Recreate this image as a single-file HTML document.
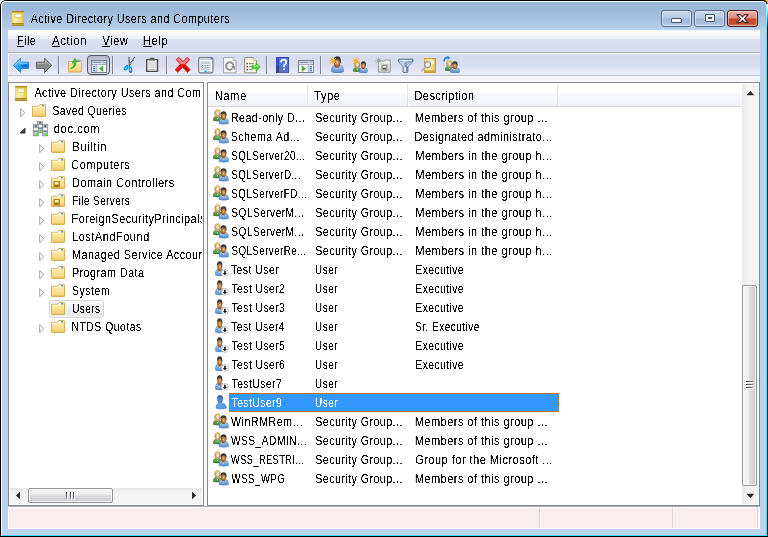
<!DOCTYPE html>
<html><head><meta charset="utf-8"><title>Active Directory Users and Computers</title>
<style>
html,body{margin:0;padding:0;}
body{width:768px;height:537px;position:relative;overflow:hidden;background:#fff;font-family:"Liberation Sans", sans-serif;font-size:12px;color:#000;}
div,span,svg{position:absolute;box-sizing:border-box;}
.t{white-space:nowrap;line-height:14px;height:14px;filter:url(#bw);transform-origin:0 0;}
.clip{overflow:hidden;}
u{text-decoration:underline;}
</style></head>
<body>

<svg width="0" height="0" style="position:absolute">
<defs>
<filter id="bw" x="0" y="0" width="100%" height="100%" color-interpolation-filters="sRGB"><feComponentTransfer><feFuncA type="discrete" tableValues="0 0 0.15 0.8 1 1 1"/></feComponentTransfer></filter>
<linearGradient id="gFold" x1="0" y1="0" x2="0" y2="1"><stop offset="0" stop-color="#FFF2B8"/><stop offset="1" stop-color="#F5D072"/></linearGradient>
<linearGradient id="gBook" x1="0" y1="0" x2="1" y2="0"><stop offset="0" stop-color="#EED470"/><stop offset=".25" stop-color="#FBF0A8"/><stop offset=".65" stop-color="#F6E48C"/><stop offset="1" stop-color="#E2BA46"/></linearGradient>
<linearGradient id="gBlueSh" x1="0" y1="0" x2="0" y2="1"><stop offset="0" stop-color="#B0D0F2"/><stop offset="1" stop-color="#4C86CC"/></linearGradient>
<linearGradient id="gGreenSh" x1="0" y1="0" x2="0" y2="1"><stop offset="0" stop-color="#7CB864"/><stop offset="1" stop-color="#3C8030"/></linearGradient>
<radialGradient id="gFaceM" cx=".55" cy=".45" r=".6"><stop offset="0" stop-color="#F0C8A0"/><stop offset=".45" stop-color="#C07838"/><stop offset="1" stop-color="#7A3C10"/></radialGradient>
<linearGradient id="gHairW" x1="0" y1="0" x2="1" y2="0"><stop offset="0" stop-color="#A88040"/><stop offset=".3" stop-color="#D8BC58"/><stop offset=".7" stop-color="#D0B050"/><stop offset="1" stop-color="#98703C"/></linearGradient>
<radialGradient id="gFaceW" cx=".5" cy=".4" r=".6"><stop offset="0" stop-color="#FFF6EC"/><stop offset=".6" stop-color="#F0D0B0"/><stop offset="1" stop-color="#C08858"/></radialGradient>
<symbol id="folder" viewBox="0 0 16 16">
 <path d="M1.5 4.3 L1.5 14 Q1.5 14.5 2 14.5 L14 14.5 Q14.5 14.5 14.5 14 L14.5 3.3 Q14.5 2.5 13.7 2.5 L8.9 2.5 L7.5 4.3 Z" fill="url(#gFold)" stroke="#D6AE54" stroke-width="1"/>
 <path d="M2.2 5.3 L7.9 5.3 L9.3 3.5 L13.8 3.5" fill="none" stroke="#FFFBE2" stroke-width="1"/>
 <path d="M2 13.6 H14" stroke="#EDC25E" stroke-width="1"/>
 <rect x="10.6" y="3" width="2.6" height="1.5" fill="#5AA0EC"/>
 <rect x="9.6" y="3" width="1.4" height="1.5" fill="#fff" opacity=".85"/>
</symbol>
<symbol id="folderou" viewBox="0 0 16 16">
 <use href="#folder"/>
 <rect x="4" y="7.4" width="5.4" height="5.6" fill="#C49A28" stroke="#A47C14" stroke-width=".8"/>
 <rect x="5" y="8.2" width="3.4" height="2.2" fill="#FFF4B0"/>
 <rect x="5" y="8.2" width="1.6" height="1.1" fill="#FFFFF0"/>
 <rect x="5" y="11" width="3.4" height="1.2" fill="#8A6810"/>
</symbol>
<symbol id="book" viewBox="0 0 12 15" preserveAspectRatio="none">
 <rect x="0" y="0" width="12" height="15" fill="url(#gBook)"/>
 <rect x="0" y="0" width="12" height="1" fill="#B08A1A"/>
 <rect x="0" y="1" width="12" height="1" fill="#D2B042"/>
 <rect x="2.9" y="2.9" width="6.4" height="3.4" fill="#FFFEF2" stroke="#DCBE50" stroke-width=".8"/>
 <rect x="0" y="12" width="12" height="1" fill="#A88A1C"/>
 <rect x="0" y="13" width="12" height="1" fill="#BCA444"/>
 <rect x="0" y="14" width="12" height="1" fill="#B08A1A"/>
</symbol>
<symbol id="domain" viewBox="0 0 16 16">
 <rect x="4.6000000000000005" y="0.4" width="5" height="11.0" fill="#BCC4D0" stroke="#788090" stroke-width=".7"/>
 <rect x="5.1000000000000005" y="0.9" width="4" height="2.4" fill="#E6EAF0"/>
 <ellipse cx="7.1" cy="1.9" rx="1.5" ry=".75" fill="#12323A"/>
 <rect x="5.1000000000000005" y="4" width="4" height="2" fill="#F6F8FC"/>
 <rect x="5.1000000000000005" y="3.4" width="4" height=".6" fill="#8890A0"/>
 <rect x="5.1000000000000005" y="6.8" width="4" height=".8" fill="#5C6474"/>
 <rect x="7.0" y="8.8" width="2.2" height="2.3" fill="#3CE010"/>
 <rect x="7.4" y="9.0" width="1.2" height="1" fill="#A0F050"/>
 <rect x="0.4" y="3.4" width="5" height="11.399999999999999" fill="#BCC4D0" stroke="#788090" stroke-width=".7"/>
 <rect x="0.9" y="3.9" width="4" height="2.4" fill="#E6EAF0"/>
 <ellipse cx="2.9" cy="4.9" rx="1.5" ry=".75" fill="#12323A"/>
 <rect x="0.9" y="7" width="4" height="2" fill="#F6F8FC"/>
 <rect x="0.9" y="6.4" width="4" height=".6" fill="#8890A0"/>
 <rect x="0.9" y="9.8" width="4" height=".8" fill="#5C6474"/>
 <rect x="2.8" y="12.4" width="2.2" height="2.3" fill="#3CE010"/>
 <rect x="3.2" y="12.6" width="1.2" height="1" fill="#A0F050"/>
 <rect x="9.700000000000001" y="3.4" width="5" height="11.399999999999999" fill="#BCC4D0" stroke="#788090" stroke-width=".7"/>
 <rect x="10.200000000000001" y="3.9" width="4" height="2.4" fill="#E6EAF0"/>
 <ellipse cx="12.200000000000001" cy="4.9" rx="1.5" ry=".75" fill="#12323A"/>
 <rect x="10.200000000000001" y="7" width="4" height="2" fill="#F6F8FC"/>
 <rect x="10.200000000000001" y="6.4" width="4" height=".6" fill="#8890A0"/>
 <rect x="10.200000000000001" y="9.8" width="4" height=".8" fill="#5C6474"/>
 <rect x="12.100000000000001" y="12.4" width="2.2" height="2.3" fill="#3CE010"/>
 <rect x="12.5" y="12.6" width="1.2" height="1" fill="#A0F050"/>
</symbol>
<symbol id="man" viewBox="0 0 11 14" preserveAspectRatio="none">
 <path d="M0.5 13 Q0.3 8.3 3.3 7.6 L7.7 7.6 Q10.8 8.3 10.5 13 Q5.5 15 0.5 13 Z" fill="url(#gBlueSh)" stroke="#4A7CBC" stroke-width=".6"/>
 <path d="M3.6 7.6 L5.2 11.4 L6.4 7.6 Z" fill="#F6FAFE"/>
 <path d="M2.6 4.4 Q2.5 8.2 3.9 9.4 Q5.2 10.2 6.6 9.2 Q8 7.6 7.8 4 Q6.6 1.6 4.6 2 Q3 2.6 2.6 4.4 Z" fill="url(#gFaceM)"/>
 <path d="M2.3 4.6 Q1.8 0.3 5.6 0.3 Q9 0.5 8.3 5.6 L7.7 6.6 Q7.8 3 5.8 2.6 Q3.4 2.4 2.3 4.6 Z" fill="#34383C"/>
</symbol>
<symbol id="woman" viewBox="0 0 10 13" preserveAspectRatio="none">
 <path d="M0.3 12 Q0 8.2 3 7.6 L6.5 7.6 Q9.5 8.2 9.5 12 Q5 13.5 0.3 12 Z" fill="url(#gGreenSh)" stroke="#356E2A" stroke-width=".6"/>
 <path d="M3.9 7.6 L4.9 11.2 L5.9 7.6 Z" fill="#F4F8F0"/>
 <rect x="4.3" y="8" width="1.2" height="1.2" fill="#E03020"/>
 <path d="M1.9 7 Q0.4 1 4.6 0.2 Q8.8 0.4 7.7 7 Z" fill="url(#gHairW)"/>
 <ellipse cx="5" cy="4.6" rx="1.9" ry="3" fill="url(#gFaceW)"/>
 <path d="M2.3 4 Q2.2 0.6 4.8 0.5 Q7.4 0.8 7.4 3.8 Q6 1.9 4.4 2.2 Q3 2.4 2.3 4 Z" fill="#DCC060"/>
</symbol>
<symbol id="group" viewBox="0 0 16 16">
 <use href="#woman" x="0" y="0" width="9.5" height="12.5"/>
 <use href="#man" x="5.5" y="2" width="10.5" height="13.5"/>
</symbol>
<symbol id="user" viewBox="0 0 16 16">
 <use href="#man" x="2" y="0" width="9.6" height="15.2" preserveAspectRatio="none"/>
</symbol>
<symbol id="userdis" viewBox="0 0 16 16">
 <use href="#man" x="2" y="0" width="9.6" height="15.2" preserveAspectRatio="none"/>
 <circle cx="11.9" cy="11.9" r="3.4" fill="#fff" stroke="#B4B4B4" stroke-width=".8"/>
 <path d="M11.1 9.8 h1.6 v2.1 h1.3 l-2.1 2.4 l-2.1 -2.4 h1.3 Z" fill="#161616"/>
</symbol>
<symbol id="usersel" viewBox="0 0 16 16">
 <path d="M3 14.2 Q2.6 10 5.6 9.4 L10 9.4 Q13.6 10 13.4 14.2 Q8 16 3 14.2 Z" fill="#5C9CE2" stroke="#3C7CCC" stroke-width=".5"/>
 <ellipse cx="7" cy="5.6" rx="2.7" ry="3.9" fill="#4A84D0"/>
 <path d="M4.2 5 Q3.8 0.9 7.4 0.9 Q10.6 1.1 10 6.2 Q9.4 3.3 7.4 3.1 Q5.2 3 4.2 5 Z" fill="#2E60AC"/>
 <path d="M6 9.6 L7.4 12.6 L8.6 9.6 Z" fill="#78B0EC"/>
</symbol>
</defs>
</svg>

<div style="left:0px;top:0px;width:768px;height:537px;background:#000;border-radius:6px 6px 0 0;"></div>
<div style="left:767px;top:0px;width:1px;height:32px;background:linear-gradient(#fff 0,#fff 8px,#8A7A60 18px,#000 30px);"></div>
<div style="left:1px;top:1px;width:766px;height:535px;background:#fff;border-radius:5px 5px 0 0;"></div>
<div style="left:1px;top:30px;width:766px;height:506px;background:linear-gradient(90deg,#fff 0,#fff 1px,transparent 1px),#3CD8F8;"></div>
<div style="left:1px;top:1px;width:766px;height:29px;background:#fff;border-radius:5px 5px 0 0;"></div>
<div style="left:766px;top:3px;width:1px;height:60px;background:linear-gradient(#A8E8FF,#3CD8F8);"></div>
<div style="left:2px;top:2px;width:764px;height:533px;border-radius:4px 4px 0 0;background:linear-gradient(#9BB8D8 0,#9CB9D9 8px,#A4BEDD 13px,#AAC5E4 19px,#B3CCEA 25px,#B9D2EE 28px,#BDD2EF 34px,#BDD2EF 100%);"></div>
<div style="left:1px;top:30px;width:1px;height:506px;background:#FFFFFF;"></div>
<svg style="left:762px;top:0" width="6" height="6"><path d="M1.6 0 L6 0 L6 4.6 Q5.4 1 1.6 0 Z" fill="#FFCC00"/><path d="M0 .5 L2 .5 Q4.6 1.2 5.3 4" fill="none" stroke="#0C0C08" stroke-width="1.1"/></svg>
<svg style="left:0;top:0" width="4" height="4"><path d="M0 0 L3.5 0 Q0.5 0.5 0 3.5 Z" fill="#E8F0F8"/></svg>
<svg style="left:12px;top:11px" width="12" height="15"><use href="#book"/></svg>
<span class="t" style="left:30px;top:12px;transform:translateX(0.7px) scaleX(0.8965);letter-spacing:0.507px;">Active Directory Users and Computers</span>
<div style="left:661px;top:10px;width:31px;height:17px;background:linear-gradient(#C7D8EC 0,#B5CAE3 48%,#9FB9D8 52%,#A9C2DF 85%,#C0D6EE 100%);border:1px solid #5A6C88;border-radius:3px;box-shadow:inset 0 0 0 1px rgba(255,255,255,.45);"></div>
<div style="left:694px;top:10px;width:31px;height:17px;background:linear-gradient(#C7D8EC 0,#B5CAE3 48%,#9FB9D8 52%,#A9C2DF 85%,#C0D6EE 100%);border:1px solid #5A6C88;border-radius:3px;box-shadow:inset 0 0 0 1px rgba(255,255,255,.45);"></div>
<div style="left:727px;top:10px;width:31px;height:17px;background:linear-gradient(#ECB2A6 0,#DE8C7C 48%,#C8452A 52%,#C7502F 85%,#D8805F 100%);border:1px solid #4A1420;border-radius:3px;box-shadow:inset 0 0 0 1px rgba(255,255,255,.45);"></div>
<div style="left:671px;top:18px;width:11px;height:5px;background:#F4F6FA;border:1px solid #4A5568;border-radius:1px;"></div>
<div style="left:705px;top:14px;width:10px;height:8px;background:#F4F6FA;border:1px solid #4A5568;border-radius:1px;"></div>
<div style="left:708px;top:17px;width:4px;height:2px;background:#7D94B5;border:1px solid #4A5568;"></div>
<svg style="left:735px;top:13px" width="15" height="11"><path d="M1.8 1.6 L5.4 1.6 L7.5 3.9 L9.6 1.6 L13.2 1.6 L9.5 5.6 L13.2 9.6 L9.6 9.6 L7.5 7.3 L5.4 9.6 L1.8 9.6 L5.5 5.6 Z" fill="#FAFAFA" stroke="#4E2830" stroke-width="1.1" stroke-linejoin="round"/></svg>
<div style="left:8px;top:30px;width:752px;height:499px;background:#F5F3F8;"></div>
<div style="left:8px;top:30px;width:752px;height:22px;background:linear-gradient(#FFFFFF 0,#FCFCFE 4px,#F1F2FC 5px,#EEF0FA 8.5px,#DADFF1 9px,#D6DBEE 100%);"></div>
<span class="t" style="left:17px;top:34px;transform:translateX(0.49px) scaleX(0.8587);letter-spacing:0.522px;"><u>F</u>ile</span>
<span class="t" style="left:52px;top:34px;transform:translateX(0.0px) scaleX(0.9535);letter-spacing:0.574px;"><u>A</u>ction</span>
<span class="t" style="left:102px;top:34px;transform:translateX(0.55px) scaleX(0.8952);letter-spacing:0.754px;"><u>V</u>iew</span>
<span class="t" style="left:142px;top:34px;transform:translateX(0.76px) scaleX(0.9353);letter-spacing:0.696px;"><u>H</u>elp</span>
<div style="left:8px;top:52px;width:752px;height:1px;background:#ADAFB5;"></div>
<div style="left:8px;top:53px;width:752px;height:1px;background:#F4F5FB;"></div>
<div style="left:8px;top:54px;width:752px;height:21px;background:linear-gradient(#D6DBEE 0,#D8DDF0 55%,#DFE3F5 72%,#E7E8F6 86%,#E9E8F6 100%);"></div>
<div style="left:8px;top:75px;width:752px;height:1px;background:#B4BECE;"></div>
<div style="left:8px;top:76px;width:752px;height:1px;background:#FBF8F9;"></div>
<div style="left:8px;top:81px;width:752px;height:1px;background:#FDFDFE;"></div>
<div style="left:8px;top:53px;width:1px;height:22px;background:#F8F9FD;"></div>
<svg width="0" height="0" style="position:absolute"><defs>
<linearGradient id="tbBack" x1="0" y1="0" x2="1" y2="1"><stop offset="0" stop-color="#7FD2FF"/><stop offset=".5" stop-color="#2AA2F0"/><stop offset="1" stop-color="#0A6CC8"/></linearGradient>
<linearGradient id="tbFwd" x1="0" y1="0" x2="0" y2="1"><stop offset="0" stop-color="#A8A8A8"/><stop offset=".5" stop-color="#868686"/><stop offset="1" stop-color="#9C9C9C"/></linearGradient>
<linearGradient id="tbBtn" x1="0" y1="0" x2="0" y2="1"><stop offset="0" stop-color="#B4B8C8"/><stop offset=".25" stop-color="#C6CADA"/><stop offset="1" stop-color="#D9DDEB"/></linearGradient>
<linearGradient id="tbHelp" x1="0" y1="0" x2="0" y2="1"><stop offset="0" stop-color="#4D78E8"/><stop offset="1" stop-color="#5A76D0"/></linearGradient>
<linearGradient id="tbFun" x1="0" y1="0" x2="1" y2="0"><stop offset="0" stop-color="#86A4C8"/><stop offset=".45" stop-color="#CCDCEE"/><stop offset="1" stop-color="#5C7CA8"/></linearGradient>
<linearGradient id="tbGray" x1="0" y1="0" x2="0" y2="1"><stop offset="0" stop-color="#EEEEEE"/><stop offset="1" stop-color="#D2D2D2"/></linearGradient>
<symbol id="star" viewBox="-4 -4 8 8"><g stroke-width="1" stroke-linecap="butt"><path d="M0 -4 V4 M-4 0 H4 M-2.8 -2.8 L2.8 2.8 M-2.8 2.8 L2.8 -2.8"/></g><circle r="1.9" stroke="none"/></symbol>
</defs></svg>
<svg style="left:12px;top:57px" width="18" height="17"><path d="M1.3 8.3 L8.4 1.3 L8.4 5.2 L16.6 5.2 L16.6 11.4 L8.4 11.4 L8.4 15.4 Z" fill="url(#tbBack)" stroke="#2C8EDC" stroke-width="1" stroke-linejoin="round"/><path d="M9.4 8.6 L15.6 6.6 L15.6 10.4 L9.4 10.4 Z" fill="#0A64C4" opacity=".75"/><path d="M2.8 8.2 L7.6 3.4 L7.6 6.2 L15.6 6.2" fill="none" stroke="#B8E8FF" stroke-width=".8" opacity=".8"/></svg>
<svg style="left:35px;top:57px" width="18" height="17"><path d="M16.7 8.3 L9.6 1.3 L9.6 5.2 L1.4 5.2 L1.4 11.4 L9.6 11.4 L9.6 15.4 Z" fill="url(#tbFwd)" stroke="#606060" stroke-width="1" stroke-linejoin="round"/><path d="M2.4 6.3 L10.5 6.3 L10.5 3.6 L15.2 8.3" fill="none" stroke="#C4C4C4" stroke-width=".8" opacity=".8"/></svg>
<div style="left:58px;top:56px;width:1px;height:18px;background:#7F838E;"></div>
<div style="left:59px;top:56px;width:1px;height:18px;background:#E9ECF7;"></div>
<svg style="left:67px;top:57px" width="17" height="17"><path d="M1.5 4.5 L1.5 15 L14.5 15 L14.5 3.8 Q14.5 3 13.6 3 L9.6 3 L8.4 4.5 Z" fill="url(#gFold)" stroke="#D8AE52" stroke-width="1"/><path d="M2.3 5.5 L14 5.5" stroke="#FFF8D8" stroke-width="1"/><rect x="10.5" y="3.4" width="3" height="1.4" fill="#5A9AE8"/><path d="M3.2 11.6 Q7.4 10 7 5.6 L5 6.2 L7.8 1.6 L10.8 5 L8.9 5.2 Q9.4 11.2 3.2 11.6 Z" fill="#48C038" stroke="#2C9820" stroke-width=".6"/></svg>
<div style="left:87px;top:55px;width:23px;height:20px;border:1.5px solid #51555F;border-radius:4px;background:linear-gradient(#B2B6C6 0,#C4C8D8 5px,#D6DAE8 100%);"></div>
<svg style="left:91px;top:60px" width="16" height="13"><rect x=".5" y=".5" width="15" height="12" fill="#fff" stroke="#7A828E"/><rect x="1" y="1" width="14" height="3.2" fill="#DDE2EE"/><path d="M1.5 2.3 H10.5" stroke="#5A78A8" stroke-width=".9"/><rect x="11.6" y="1.6" width="1.1" height="1.3" fill="#6A7A98"/><rect x="13.4" y="1.6" width="1.1" height="1.3" fill="#6A7A98"/><path d="M1 4.6 H15" stroke="#8890A0" stroke-width=".8"/><rect x="1" y="5" width="4.6" height="7" fill="#EEF1F8"/><path d="M5.8 5 V12" stroke="#8890A0" stroke-width=".8"/><path d="M2 6.6 H4.4 M2 8.6 H4.4 M2 10.6 H4.4" stroke="#2E7CD6" stroke-width="1.1"/><path d="M12 6 L12 11.4 L8.4 8.7 Z" fill="#3CB82C" stroke="#2C9820" stroke-width=".5"/></svg>
<div style="left:112px;top:56px;width:1px;height:18px;background:#7F838E;"></div>
<div style="left:113px;top:56px;width:1px;height:18px;background:#E9ECF7;"></div>
<svg style="left:122px;top:56px" width="15" height="18"><path d="M6.3 1 L7.8 1 L8 9.4 L6.5 9.4 Z" fill="#6C747E"/><path d="M13.1 1.4 L7.6 9.6" stroke="#FFFFFF" stroke-width="2.6" opacity=".7"/><path d="M12.8 1.2 L7.4 9.2" stroke="#30343C" stroke-width="1.5" stroke-dasharray="1.1 .5"/><ellipse cx="4.2" cy="11.7" rx="3.1" ry="2" transform="rotate(-52 4.2 11.7)" fill="#109CF0"/><ellipse cx="3.9" cy="12.2" rx="1" ry=".5" transform="rotate(-52 3.9 12.2)" fill="#E4F4FF"/><ellipse cx="8.5" cy="13.6" rx="1.8" ry="3.3" transform="rotate(-6 8.5 13.6)" fill="#109CF0"/><path d="M7 15.4 Q8.6 17.6 10.2 15.2" fill="none" stroke="#0A4C80" stroke-width=".9"/><ellipse cx="8.5" cy="13.7" rx=".5" ry="1.4" fill="#E4F4FF"/><circle cx="7.6" cy="9.8" r=".7" fill="#3040C8"/></svg>
<svg style="left:145px;top:57px" width="14" height="16"><rect x="1" y="2" width="12.2" height="13" fill="#4C4C4C"/><rect x="4.6" y=".8" width="5" height="2.2" rx=".8" fill="#5A5A5A"/><rect x="2.4" y="3.2" width="9.4" height="10.4" fill="#FCFCFC"/><rect x="4.2" y="2.2" width="5.8" height="1.4" fill="#6A6A6A"/><path d="M2.4 5.3 H11.8 M2.4 7.1 H11.8 M2.4 8.9 H11.8 M2.4 10.7 H11.8 M2.4 12.5 H11.8" stroke="#BDBDBD" stroke-width=".8"/></svg>
<div style="left:166px;top:56px;width:1px;height:18px;background:#7F838E;"></div>
<div style="left:167px;top:56px;width:1px;height:18px;background:#E9ECF7;"></div>
<svg style="left:174px;top:56px" width="18" height="18"><path d="M2 3.6 L4.8 1.2 L8.8 5.4 L13 1.2 L15.8 3.6 L11.4 8.4 L16.4 13.8 L13.4 16.6 L8.6 11.4 L3.8 16.4 L1 13.8 L6 8.3 Z" fill="#E81212" stroke="#D83434" stroke-width=".6"/><path d="M2.8 3.6 L4.8 2 L8.8 6.2 L13 2 L15 3.6 L10.6 8.3 L6.6 8 Z" fill="#F59A9A" opacity=".85"/><path d="M11.6 10.4 L15.4 14 L13.6 15.6 L10.2 12 Z" fill="#B00606" opacity=".75"/></svg>
<svg style="left:198px;top:57px" width="16" height="17"><rect x=".7" y=".7" width="14.2" height="15.2" rx="1.6" fill="#fff" stroke="#6E7688" stroke-width="1.2"/><path d="M1.4 2.6 H14.2" stroke="#C0C6D4" stroke-width="1"/><rect x="12.6" y="1.2" width="1.4" height="1.2" fill="#3A70D0"/><path d="M3 5 H11.8 V12.4 H3 Z" fill="#F4F6FA" stroke="#B4BAC8" stroke-width="1"/><path d="M4.6 5 V6.6 H7.2 V5 M8 5 V6.6 H10.6 V5" fill="none" stroke="#B4BAC8" stroke-width=".8"/><rect x="4" y="8" width="1.3" height="1.3" fill="#1E8CF0"/><path d="M6.2 8.6 H10.6 M6.2 10.6 H10.6" stroke="#8C98B0" stroke-width=".9"/><rect x="4" y="10" width="1" height="1" fill="#8C98B0"/><rect x="6.4" y="13.6" width="2.8" height="1.6" fill="#20B8F0"/><rect x="10" y="13.6" width="2.8" height="1.6" fill="#C8CCD4"/></svg>
<svg style="left:223px;top:57px" width="14" height="17"><path d="M.6 .6 H10 L13 3.6 V15.8 H.6 Z" fill="#FCFCFC" stroke="#A2A2A2" stroke-width="1"/><path d="M10 .6 V3.6 H13" fill="#E8E8E8" stroke="#A0A0A0" stroke-width=".7"/><circle cx="6.8" cy="9" r="3.7" fill="none" stroke="#8E8E8E" stroke-width="2"/><path d="M7.6 9.6 L11.8 9.4 L11.6 13.2 Z" fill="#7C7C7C"/><path d="M8 10 L11 12.6" stroke="#fff" stroke-width=".8"/></svg>
<svg style="left:244px;top:57px" width="18" height="17"><path d="M.6 .6 H9.6 L12.6 3.6 V15.8 H.6 Z" fill="#FFF8DC" stroke="#8A8A8A" stroke-width="1"/><path d="M9.6 .6 V3.6 H12.6" fill="#F0F0F0" stroke="#A0A0A0" stroke-width=".7"/><rect x="2.6" y="6" width="1.3" height="1.3" fill="#202840"/><rect x="2.6" y="9" width="1.3" height="1.3" fill="#202840"/><rect x="2.6" y="12" width="1.3" height="1.3" fill="#202840"/><path d="M5 6.7 H10 M5 9.7 H8 M5 12.7 H8.4" stroke="#6A7CA0" stroke-width="1"/><path d="M8 8.4 H12 V5.8 L16.4 10 L12 14.2 V11.8 H8 Z" fill="#4CC83C" stroke="#38B028" stroke-width=".6"/><path d="M9 9.6 H12.6 V8 L14.6 10" fill="none" stroke="#B0F0A0" stroke-width=".8"/></svg>
<div style="left:266px;top:56px;width:1px;height:18px;background:#7F838E;"></div>
<div style="left:267px;top:56px;width:1px;height:18px;background:#E9ECF7;"></div>
<svg style="left:276px;top:57px" width="13" height="16"><rect x="0" y="0" width="13" height="15.8" fill="#2C4494"/><rect x="0" y="0" width="3" height="9" fill="#2E50C8"/><rect x="0" y="9" width="3" height="6.8" fill="#34488C"/><rect x="3" y=".8" width="9.2" height="14" fill="url(#tbHelp)"/><rect x="3" y="9" width="9.2" height="5.8" fill="#5070C8" opacity=".6"/><path d="M5 5.4 Q5 2.6 7.6 2.6 Q10.2 2.6 10.2 5 Q10.2 6.6 8.8 7.6 Q7.9 8.3 7.9 10" fill="none" stroke="#fff" stroke-width="1.7"/><rect x="7" y="11.4" width="1.8" height="1.8" fill="#fff"/></svg>
<svg style="left:298px;top:60px" width="16" height="13"><rect x=".5" y=".5" width="15" height="12" fill="#fff" stroke="#7A828E"/><rect x="1" y="1" width="14" height="3.2" fill="#DDE2EE"/><path d="M1.5 2.3 H10.5" stroke="#5A78A8" stroke-width=".9"/><rect x="11.6" y="1.6" width="1.1" height="1.3" fill="#6A7A98"/><rect x="13.4" y="1.6" width="1.1" height="1.3" fill="#6A7A98"/><path d="M1 4.6 H15" stroke="#8890A0" stroke-width=".8"/><rect x="10.4" y="5" width="4.6" height="7" fill="#EEF1F8"/><path d="M10.2 5 V12" stroke="#8890A0" stroke-width=".8"/><path d="M11.6 6.6 H14 M11.6 8.6 H14 M11.6 10.6 H14" stroke="#2E7CD6" stroke-width="1.1"/><path d="M4 6 L4 11.4 L7.6 8.7 Z" fill="#3CB82C" stroke="#2C9820" stroke-width=".5"/></svg>
<div style="left:320px;top:56px;width:1px;height:18px;background:#7F838E;"></div>
<div style="left:321px;top:56px;width:1px;height:18px;background:#E9ECF7;"></div>
<svg style="left:331px;top:56px" width="13" height="17"><use href="#man" x="0" y="0" width="13" height="17"/></svg>
<svg style="left:328.5px;top:56.5px" width="8" height="8"><use href="#star" fill="#FFAC28" stroke="#FFB440"/></svg>
<svg style="left:353px;top:61px" width="9" height="11"><use href="#woman" width="9" height="11"/></svg>
<svg style="left:359px;top:61px" width="9" height="12"><use href="#man" width="9" height="12"/></svg>
<svg style="left:351.5px;top:56.5px" width="8" height="8"><use href="#star" fill="#FFAC28" stroke="#FFB440"/></svg>
<svg style="left:375px;top:56px" width="16" height="17"><path d="M3.4 5 V16.2 H15.2 V4 H9.8 L8.8 5 Z" fill="url(#tbGray)" stroke="#9A9A9A" stroke-width="1"/><path d="M4 6.4 H14.8" stroke="#F4F4F4" stroke-width="1"/><rect x="7" y="9" width="5" height="5" fill="#B0B0B0" stroke="#808080" stroke-width=".8"/><rect x="8" y="10" width="3" height="1.6" fill="#F0F0F0"/><rect x="8" y="12" width="3" height="1.2" fill="#505050"/></svg>
<svg style="left:374.5px;top:56.5px" width="7.5" height="7.5"><use href="#star" fill="#A4A4A4" stroke="#B0B0B0"/></svg>
<svg style="left:398px;top:58px" width="16" height="15"><path d="M0.5 1.2 H14.9 V3.4 L9.8 8.7 V14.2 Q7.4 15 5 14.2 V8.7 L0.5 3.4 Z" fill="url(#tbFun)" stroke="#58728E" stroke-width="1"/><path d="M1.4 2.5 H14" stroke="#D4E8FA" stroke-width="1.1"/><path d="M7.6 4.2 V9" stroke="#506C90" stroke-width="2.4" opacity=".55"/><path d="M2 4.2 L5.9 8.4 M13.3 4.2 L9 8.4" stroke="#F2F7FC" stroke-width=".9"/><rect x="6.1" y="9.2" width="1.9" height="4.4" fill="#E6EEF6"/><path d="M8.8 8.8 V13.6" stroke="#4A6488" stroke-width="1.2" opacity=".7"/></svg>
<svg style="left:421px;top:58px" width="16" height="16"><rect x="3" y="0" width="12" height="15" fill="#C89A28"/><rect x="3.8" y="1" width="10.4" height="11.6" fill="url(#gBook)"/><rect x="3.8" y="12.6" width="10.4" height="1.6" fill="#C8A848"/><rect x="7" y="2.6" width="6" height="3" fill="#FFFDE8"/><circle cx="6.6" cy="6.6" r="3" fill="#F4F8FC" fill-opacity=".85" stroke="#8A8E98" stroke-width="1.1"/><path d="M4.4 9 L.8 12.8" stroke="#B0B4BC" stroke-width="1.6" stroke-linecap="round"/></svg>
<svg style="left:445px;top:60px" width="9" height="11"><use href="#woman" width="9" height="11"/></svg>
<svg style="left:450px;top:61px" width="10" height="12"><use href="#man" width="10" height="12"/></svg>
<svg style="left:443px;top:56px" width="8" height="6"><path d="M1 5.6 Q1 1.4 5 1.6" fill="none" stroke="#1C78E0" stroke-width="1.5"/><path d="M4.4 0 L7.4 1.8 L4.6 3.8 Z" fill="#1C78E0"/></svg>
<div style="left:8px;top:82px;width:196px;height:424px;background:#fff;border:1px solid #828693;"></div>
<div style="left:8px;top:506px;width:752px;height:1px;background:#A9ABB3;"></div>
<div class="clip" style="left:9px;top:83px;width:193.4px;height:405px;">
<svg style="left:6px;top:3px" width="12" height="15"><use href="#book"/></svg>
<span class="t" style="left:25px;top:3px;transform:translateX(0.45px) scaleX(0.8978);letter-spacing:0.51px;">Active Directory Users and Com</span>
<svg style="left:11px;top:25px" width="7" height="10"><path d="M0.7 0.6 L4.9 4.6 L0.7 8.6 Z" fill="#fff" stroke="#A0A0A0" stroke-width="1"/></svg>
<svg style="left:22px;top:19px" width="16" height="16"><use href="#folder"/></svg>
<span class="t" style="left:43px;top:21px;transform:translateX(0.44px) scaleX(0.8598);letter-spacing:0.565px;">Saved Queries</span>
<svg style="left:10px;top:43.5px" width="8" height="8"><path d="M6 1.2 L6 6 L1.2 6 Z" fill="#484848" stroke="#262626" stroke-width=".9"/></svg>
<svg style="left:24px;top:38px" width="16" height="16"><use href="#domain"/></svg>
<span class="t" style="left:44px;top:39px;transform:translateX(0.75px) scaleX(0.9302);letter-spacing:0.652px;">doc.com</span>
<svg style="left:30px;top:61px" width="7" height="10"><path d="M0.7 0.6 L4.9 4.6 L0.7 8.6 Z" fill="#fff" stroke="#A0A0A0" stroke-width="1"/></svg>
<svg style="left:41px;top:55px" width="16" height="16"><use href="#folder"/></svg>
<span class="t" style="left:62px;top:57px;transform:translateX(0.92px) scaleX(0.9823);letter-spacing:0.449px;">Builtin</span>
<svg style="left:30px;top:79px" width="7" height="10"><path d="M0.7 0.6 L4.9 4.6 L0.7 8.6 Z" fill="#fff" stroke="#A0A0A0" stroke-width="1"/></svg>
<svg style="left:41px;top:73px" width="16" height="16"><use href="#folder"/></svg>
<span class="t" style="left:62px;top:75px;transform:translateX(0.35px) scaleX(0.9138);letter-spacing:0.641px;">Computers</span>
<svg style="left:30px;top:97px" width="7" height="10"><path d="M0.7 0.6 L4.9 4.6 L0.7 8.6 Z" fill="#fff" stroke="#A0A0A0" stroke-width="1"/></svg>
<svg style="left:41px;top:91px" width="16" height="16"><use href="#folderou"/></svg>
<span class="t" style="left:62px;top:93px;transform:translateX(0.98px) scaleX(0.9155);letter-spacing:0.522px;">Domain Controllers</span>
<svg style="left:30px;top:115px" width="7" height="10"><path d="M0.7 0.6 L4.9 4.6 L0.7 8.6 Z" fill="#fff" stroke="#A0A0A0" stroke-width="1"/></svg>
<svg style="left:41px;top:109px" width="16" height="16"><use href="#folderou"/></svg>
<span class="t" style="left:63px;top:111px;transform:translateX(0.27px) scaleX(0.828);letter-spacing:0.498px;">File Servers</span>
<svg style="left:30px;top:133px" width="7" height="10"><path d="M0.7 0.6 L4.9 4.6 L0.7 8.6 Z" fill="#fff" stroke="#A0A0A0" stroke-width="1"/></svg>
<svg style="left:41px;top:127px" width="16" height="16"><use href="#folder"/></svg>
<span class="t" style="left:62px;top:129px;transform:translateX(0.59px) scaleX(0.905);letter-spacing:0.489px;">ForeignSecurityPrincipals</span>
<svg style="left:30px;top:151px" width="7" height="10"><path d="M0.7 0.6 L4.9 4.6 L0.7 8.6 Z" fill="#fff" stroke="#A0A0A0" stroke-width="1"/></svg>
<svg style="left:41px;top:145px" width="16" height="16"><use href="#folder"/></svg>
<span class="t" style="left:63px;top:147px;transform:translateX(0.04px) scaleX(0.9104);letter-spacing:0.609px;">LostAndFound</span>
<svg style="left:30px;top:169px" width="7" height="10"><path d="M0.7 0.6 L4.9 4.6 L0.7 8.6 Z" fill="#fff" stroke="#A0A0A0" stroke-width="1"/></svg>
<svg style="left:41px;top:163px" width="16" height="16"><use href="#folder"/></svg>
<span class="t" style="left:62px;top:165px;transform:translateX(0.9px) scaleX(0.8996);letter-spacing:0.544px;">Managed Service Accounts</span>
<svg style="left:30px;top:187px" width="7" height="10"><path d="M0.7 0.6 L4.9 4.6 L0.7 8.6 Z" fill="#fff" stroke="#A0A0A0" stroke-width="1"/></svg>
<svg style="left:41px;top:181px" width="16" height="16"><use href="#folder"/></svg>
<span class="t" style="left:62px;top:183px;transform:translateX(0.91px) scaleX(0.8889);letter-spacing:0.585px;">Program Data</span>
<svg style="left:30px;top:205px" width="7" height="10"><path d="M0.7 0.6 L4.9 4.6 L0.7 8.6 Z" fill="#fff" stroke="#A0A0A0" stroke-width="1"/></svg>
<svg style="left:41px;top:199px" width="16" height="16"><use href="#folder"/></svg>
<span class="t" style="left:63px;top:201px;transform:translateX(0.09px) scaleX(0.8634);letter-spacing:0.678px;">System</span>
<div style="left:40px;top:217px;width:55px;height:18px;border:1px solid #D6D6D6;border-radius:3px;background:linear-gradient(#F9F9F9,#E6E6E6);box-shadow:inset 0 0 0 1px rgba(255,255,255,.6);"></div>
<svg style="left:41px;top:217px" width="16" height="16"><use href="#folder"/></svg>
<span class="t" style="left:63px;top:219px;transform:translateX(0.13px) scaleX(0.8219);letter-spacing:0.652px;">Users</span>
<svg style="left:30px;top:241px" width="7" height="10"><path d="M0.7 0.6 L4.9 4.6 L0.7 8.6 Z" fill="#fff" stroke="#A0A0A0" stroke-width="1"/></svg>
<svg style="left:41px;top:235px" width="16" height="16"><use href="#folder"/></svg>
<span class="t" style="left:62px;top:237px;transform:translateX(0.49px) scaleX(0.8603);letter-spacing:0.643px;">NTDS Quotas</span>
</div>
<div style="left:10px;top:488px;width:192px;height:16px;background:linear-gradient(#E7E7E8 0,#EFEFF0 3px,#F3F3F4 7px,#F6F6F7 8px,#F3F2F3 9px,#F4F3F4 100%);"></div>
<div style="left:28px;top:488px;width:85px;height:15px;border:1px solid #959595;border-radius:2px;background:linear-gradient(#F6F6F7 0,#ECECED 45%,#DCDCDF 50%,#CDCDD1 100%);box-shadow:inset 0 0 0 1px rgba(255,255,255,.75);"></div>
<div style="left:66.0px;top:492px;width:1.4px;height:7px;background:linear-gradient(#33353B,#6E7078 70%,#9A9CA4);"></div>
<div style="left:67.4px;top:492px;width:1px;height:8px;background:rgba(255,255,255,.85);"></div>
<div style="left:69.5px;top:492px;width:1.4px;height:7px;background:linear-gradient(#33353B,#6E7078 70%,#9A9CA4);"></div>
<div style="left:70.9px;top:492px;width:1px;height:8px;background:rgba(255,255,255,.85);"></div>
<div style="left:73.0px;top:492px;width:1.4px;height:7px;background:linear-gradient(#33353B,#6E7078 70%,#9A9CA4);"></div>
<div style="left:74.4px;top:492px;width:1px;height:8px;background:rgba(255,255,255,.85);"></div>
<svg style="left:15px;top:491px" width="6" height="9"><path d="M5 0.8 L5 8.2 L0.9 4.5 Z" fill="#2A2A2A"/></svg>
<svg style="left:191px;top:491px" width="6" height="9"><path d="M1 0.8 L1 8.2 L5.1 4.5 Z" fill="#2A2A2A"/></svg>
<div style="left:204px;top:82px;width:1px;height:424px;background:#FCFAFC;"></div>
<div style="left:206px;top:82px;width:1px;height:424px;background:#FCFAFC;"></div>
<div style="left:207px;top:82px;width:553px;height:424px;background:#fff;border:1px solid #828693;"></div>
<div style="left:208px;top:83px;width:533px;height:24px;background:linear-gradient(#FFFFFF 0,#FFFFFF 10px,#F7F8FC 11px,#F2F3F9 100%);border-bottom:1px solid #D5D5D5;"></div>
<div style="left:307px;top:84px;width:1px;height:22px;background:#E1E5EB;"></div>
<div style="left:308px;top:84px;width:1px;height:22px;background:#FFFFFF;"></div>
<div style="left:407px;top:84px;width:1px;height:22px;background:#E1E5EB;"></div>
<div style="left:408px;top:84px;width:1px;height:22px;background:#FFFFFF;"></div>
<div style="left:557px;top:84px;width:1px;height:22px;background:#E1E5EB;"></div>
<div style="left:558px;top:84px;width:1px;height:22px;background:#FFFFFF;"></div>
<span class="t" style="left:214px;top:89px;transform:translateX(0.95px) scaleX(0.8992);letter-spacing:0.899px;">Name</span>
<span class="t" style="left:314px;top:89px;transform:translateX(0.35px) scaleX(0.9023);letter-spacing:0.754px;">Type</span>
<span class="t" style="left:414px;top:89px;transform:translateX(0.44px) scaleX(0.9138);letter-spacing:0.513px;">Description</span>
<svg style="left:213px;top:109px" width="16" height="16"><use href="#group"/></svg>
<span class="t" style="left:230px;top:111px;transform:translateX(0.96px) scaleX(0.8881);letter-spacing:0.502px;">Read-only D...</span>
<span class="t" style="left:315px;top:111px;transform:translateX(0.26px) scaleX(0.8918);letter-spacing:0.478px;">Security Group...</span>
<span class="t" style="left:414px;top:111px;transform:translateX(0.68px) scaleX(0.9221);letter-spacing:0.475px;">Members of this group ...</span>
<svg style="left:213px;top:128px" width="16" height="16"><use href="#group"/></svg>
<span class="t" style="left:230px;top:130px;transform:translateX(0.66px) scaleX(0.8898);letter-spacing:0.553px;">Schema Ad...</span>
<span class="t" style="left:315px;top:130px;transform:translateX(0.26px) scaleX(0.8918);letter-spacing:0.478px;">Security Group...</span>
<span class="t" style="left:414px;top:130px;transform:translateX(0.54px) scaleX(0.9087);letter-spacing:0.48px;">Designated administrato...</span>
<svg style="left:213px;top:147px" width="16" height="16"><use href="#group"/></svg>
<span class="t" style="left:231px;top:149px;transform:translateX(0.18px) scaleX(0.8223);letter-spacing:0.542px;">SQLServer20...</span>
<span class="t" style="left:315px;top:149px;transform:translateX(0.26px) scaleX(0.8918);letter-spacing:0.478px;">Security Group...</span>
<span class="t" style="left:415px;top:149px;transform:translateX(0.28px) scaleX(0.9227);letter-spacing:0.489px;">Members in the group h...</span>
<svg style="left:213px;top:166px" width="16" height="16"><use href="#group"/></svg>
<span class="t" style="left:231px;top:168px;transform:translateX(0.18px) scaleX(0.8195);letter-spacing:0.551px;">SQLServerD...</span>
<span class="t" style="left:315px;top:168px;transform:translateX(0.26px) scaleX(0.8918);letter-spacing:0.478px;">Security Group...</span>
<span class="t" style="left:415px;top:168px;transform:translateX(0.28px) scaleX(0.9227);letter-spacing:0.489px;">Members in the group h...</span>
<svg style="left:213px;top:185px" width="16" height="16"><use href="#group"/></svg>
<span class="t" style="left:231px;top:187px;transform:translateX(0.34px) scaleX(0.8149);letter-spacing:0.562px;">SQLServerFD...</span>
<span class="t" style="left:315px;top:187px;transform:translateX(0.26px) scaleX(0.8918);letter-spacing:0.478px;">Security Group...</span>
<span class="t" style="left:415px;top:187px;transform:translateX(0.28px) scaleX(0.9227);letter-spacing:0.489px;">Members in the group h...</span>
<svg style="left:213px;top:204px" width="16" height="16"><use href="#group"/></svg>
<span class="t" style="left:231px;top:206px;transform:translateX(0.36px) scaleX(0.841);letter-spacing:0.565px;">SQLServerM...</span>
<span class="t" style="left:315px;top:206px;transform:translateX(0.26px) scaleX(0.8918);letter-spacing:0.478px;">Security Group...</span>
<span class="t" style="left:415px;top:206px;transform:translateX(0.28px) scaleX(0.9227);letter-spacing:0.489px;">Members in the group h...</span>
<svg style="left:213px;top:223px" width="16" height="16"><use href="#group"/></svg>
<span class="t" style="left:231px;top:225px;transform:translateX(0.36px) scaleX(0.841);letter-spacing:0.565px;">SQLServerM...</span>
<span class="t" style="left:315px;top:225px;transform:translateX(0.26px) scaleX(0.8918);letter-spacing:0.478px;">Security Group...</span>
<span class="t" style="left:415px;top:225px;transform:translateX(0.28px) scaleX(0.9227);letter-spacing:0.489px;">Members in the group h...</span>
<svg style="left:213px;top:242px" width="16" height="16"><use href="#group"/></svg>
<span class="t" style="left:231px;top:244px;transform:translateX(0.54px) scaleX(0.8103);letter-spacing:0.555px;">SQLServerRe...</span>
<span class="t" style="left:315px;top:244px;transform:translateX(0.26px) scaleX(0.8918);letter-spacing:0.478px;">Security Group...</span>
<span class="t" style="left:415px;top:244px;transform:translateX(0.28px) scaleX(0.9227);letter-spacing:0.489px;">Members in the group h...</span>
<svg style="left:213px;top:261px" width="16" height="16"><use href="#userdis"/></svg>
<span class="t" style="left:230px;top:263px;transform:translateX(0.9px) scaleX(0.8659);letter-spacing:0.554px;">Test User</span>
<span class="t" style="left:314px;top:263px;transform:translateX(0.93px) scaleX(0.8242);letter-spacing:0.696px;">User</span>
<span class="t" style="left:415px;top:263px;transform:translateX(0.35px) scaleX(0.8533);letter-spacing:0.554px;">Executive</span>
<svg style="left:213px;top:280px" width="16" height="16"><use href="#userdis"/></svg>
<span class="t" style="left:231px;top:282px;transform:translateX(0.5px) scaleX(0.8554);letter-spacing:0.551px;">Test User2</span>
<span class="t" style="left:314px;top:282px;transform:translateX(0.93px) scaleX(0.8242);letter-spacing:0.696px;">User</span>
<span class="t" style="left:415px;top:282px;transform:translateX(0.35px) scaleX(0.8533);letter-spacing:0.554px;">Executive</span>
<svg style="left:213px;top:299px" width="16" height="16"><use href="#userdis"/></svg>
<span class="t" style="left:231px;top:301px;transform:translateX(0.5px) scaleX(0.8554);letter-spacing:0.551px;">Test User3</span>
<span class="t" style="left:314px;top:301px;transform:translateX(0.93px) scaleX(0.8242);letter-spacing:0.696px;">User</span>
<span class="t" style="left:415px;top:301px;transform:translateX(0.35px) scaleX(0.8533);letter-spacing:0.554px;">Executive</span>
<svg style="left:213px;top:318px" width="16" height="16"><use href="#userdis"/></svg>
<span class="t" style="left:231px;top:320px;transform:translateX(0.2px) scaleX(0.8554);letter-spacing:0.551px;">Test User4</span>
<span class="t" style="left:314px;top:320px;transform:translateX(0.93px) scaleX(0.8242);letter-spacing:0.696px;">User</span>
<span class="t" style="left:415px;top:320px;transform:translateX(0.05px) scaleX(0.8453);letter-spacing:0.5px;">Sr. Executive</span>
<svg style="left:213px;top:337px" width="16" height="16"><use href="#userdis"/></svg>
<span class="t" style="left:231px;top:339px;transform:translateX(0.5px) scaleX(0.8554);letter-spacing:0.551px;">Test User5</span>
<span class="t" style="left:314px;top:339px;transform:translateX(0.93px) scaleX(0.8242);letter-spacing:0.696px;">User</span>
<span class="t" style="left:415px;top:339px;transform:translateX(0.35px) scaleX(0.8533);letter-spacing:0.554px;">Executive</span>
<svg style="left:213px;top:356px" width="16" height="16"><use href="#userdis"/></svg>
<span class="t" style="left:231px;top:358px;transform:translateX(0.5px) scaleX(0.8554);letter-spacing:0.551px;">Test User6</span>
<span class="t" style="left:314px;top:358px;transform:translateX(0.93px) scaleX(0.8242);letter-spacing:0.696px;">User</span>
<span class="t" style="left:415px;top:358px;transform:translateX(0.35px) scaleX(0.8533);letter-spacing:0.554px;">Executive</span>
<svg style="left:213px;top:375px" width="16" height="16"><use href="#userdis"/></svg>
<span class="t" style="left:231px;top:377px;transform:translateX(0.5px) scaleX(0.8553);letter-spacing:0.587px;">TestUser7</span>
<span class="t" style="left:314px;top:377px;transform:translateX(0.93px) scaleX(0.8242);letter-spacing:0.696px;">User</span>
<div style="left:229px;top:393px;width:330px;height:19px;background:#3399FF;"></div>
<div style="left:229px;top:393px;width:330px;height:19px;border:1px dotted #CC6600;"></div>
<svg style="left:213px;top:394px" width="16" height="16"><use href="#usersel"/></svg>
<span class="t" style="left:231px;top:396px;transform:translateX(0.5px) scaleX(0.8553);letter-spacing:0.587px;color:#fff;">TestUser9</span>
<span class="t" style="left:314px;top:396px;transform:translateX(0.93px) scaleX(0.8242);letter-spacing:0.696px;color:#fff;">User</span>
<svg style="left:213px;top:413px" width="16" height="16"><use href="#group"/></svg>
<span class="t" style="left:230px;top:415px;transform:translateX(0.95px) scaleX(0.8839);letter-spacing:0.643px;">WinRMRem...</span>
<span class="t" style="left:315px;top:415px;transform:translateX(0.26px) scaleX(0.8918);letter-spacing:0.478px;">Security Group...</span>
<span class="t" style="left:414px;top:415px;transform:translateX(0.68px) scaleX(0.9221);letter-spacing:0.475px;">Members of this group ...</span>
<svg style="left:213px;top:432px" width="16" height="16"><use href="#group"/></svg>
<span class="t" style="left:230px;top:434px;transform:translateX(0.95px) scaleX(0.8426);letter-spacing:0.648px;">WSS_ADMIN...</span>
<span class="t" style="left:315px;top:434px;transform:translateX(0.26px) scaleX(0.8918);letter-spacing:0.478px;">Security Group...</span>
<span class="t" style="left:414px;top:434px;transform:translateX(0.68px) scaleX(0.9221);letter-spacing:0.475px;">Members of this group ...</span>
<svg style="left:213px;top:451px" width="16" height="16"><use href="#group"/></svg>
<span class="t" style="left:231px;top:453px;transform:translateX(0.1px) scaleX(0.7624);letter-spacing:0.63px;">WSS_RESTRI...</span>
<span class="t" style="left:315px;top:453px;transform:translateX(0.26px) scaleX(0.8918);letter-spacing:0.478px;">Security Group...</span>
<span class="t" style="left:415px;top:453px;transform:translateX(0.15px) scaleX(0.9289);letter-spacing:0.452px;">Group for the Microsoft ...</span>
<svg style="left:213px;top:470px" width="16" height="16"><use href="#group"/></svg>
<span class="t" style="left:231px;top:472px;transform:translateX(0.55px) scaleX(0.7835);letter-spacing:0.899px;">WSS_WPG</span>
<span class="t" style="left:315px;top:472px;transform:translateX(0.26px) scaleX(0.8918);letter-spacing:0.478px;">Security Group...</span>
<span class="t" style="left:414px;top:472px;transform:translateX(0.68px) scaleX(0.9221);letter-spacing:0.475px;">Members of this group ...</span>
<div style="left:742px;top:84px;width:16px;height:420px;background:linear-gradient(90deg,#E7E7E8 0,#EFEFF0 3px,#F3F3F4 7px,#F6F6F7 8px,#F3F2F3 9px,#F4F3F4 100%);"></div>
<div style="left:742px;top:285px;width:15px;height:201px;border:1px solid #959595;border-radius:2px;background:linear-gradient(90deg,#F6F6F7 0,#ECECED 45%,#DCDCDF 50%,#CDCDD1 100%);box-shadow:inset 0 0 0 1px rgba(255,255,255,.75);"></div>
<div style="left:746px;top:381px;width:7px;height:1.3px;background:linear-gradient(90deg,#33353B,#6E7078 70%,#9A9CA4);"></div>
<div style="left:746px;top:382.3px;width:8px;height:1px;background:rgba(255,255,255,.85);"></div>
<div style="left:746px;top:384px;width:7px;height:1.3px;background:linear-gradient(90deg,#33353B,#6E7078 70%,#9A9CA4);"></div>
<div style="left:746px;top:385.3px;width:8px;height:1px;background:rgba(255,255,255,.85);"></div>
<div style="left:746px;top:387px;width:7px;height:1.3px;background:linear-gradient(90deg,#33353B,#6E7078 70%,#9A9CA4);"></div>
<div style="left:746px;top:388.3px;width:8px;height:1px;background:rgba(255,255,255,.85);"></div>
<svg style="left:746px;top:90px" width="9" height="6"><path d="M0.5 5.2 L4.4 0.8 L8.3 5.2 Z" fill="#2A2A2A"/></svg>
<svg style="left:746px;top:493px" width="9" height="6"><path d="M0.5 0.8 L4.4 5.2 L8.3 0.8 Z" fill="#2A2A2A"/></svg>
<div style="left:8px;top:507px;width:752px;height:1px;background:#fff;"></div>
<div style="left:8px;top:508px;width:752px;height:20px;background:#F8EEEF;"></div>
<div style="left:8px;top:508px;width:1px;height:20px;background:#fff;"></div>
<div style="left:8px;top:528px;width:752px;height:1px;background:#fff;"></div>
<div style="left:759px;top:508px;width:1px;height:21px;background:#fff;"></div>
<div style="left:539px;top:508px;width:1px;height:20px;background:#D8D6D6;"></div>
<div style="left:540px;top:508px;width:1px;height:20px;background:#FAF5F5;"></div>
<div style="left:672px;top:508px;width:1px;height:20px;background:#D8D6D6;"></div>
<div style="left:673px;top:508px;width:1px;height:20px;background:#FAF5F5;"></div>
<div style="left:757px;top:508px;width:1px;height:20px;background:#D8D6D6;"></div>
<div style="left:758px;top:508px;width:1px;height:20px;background:#FAF5F5;"></div>
</body></html>
